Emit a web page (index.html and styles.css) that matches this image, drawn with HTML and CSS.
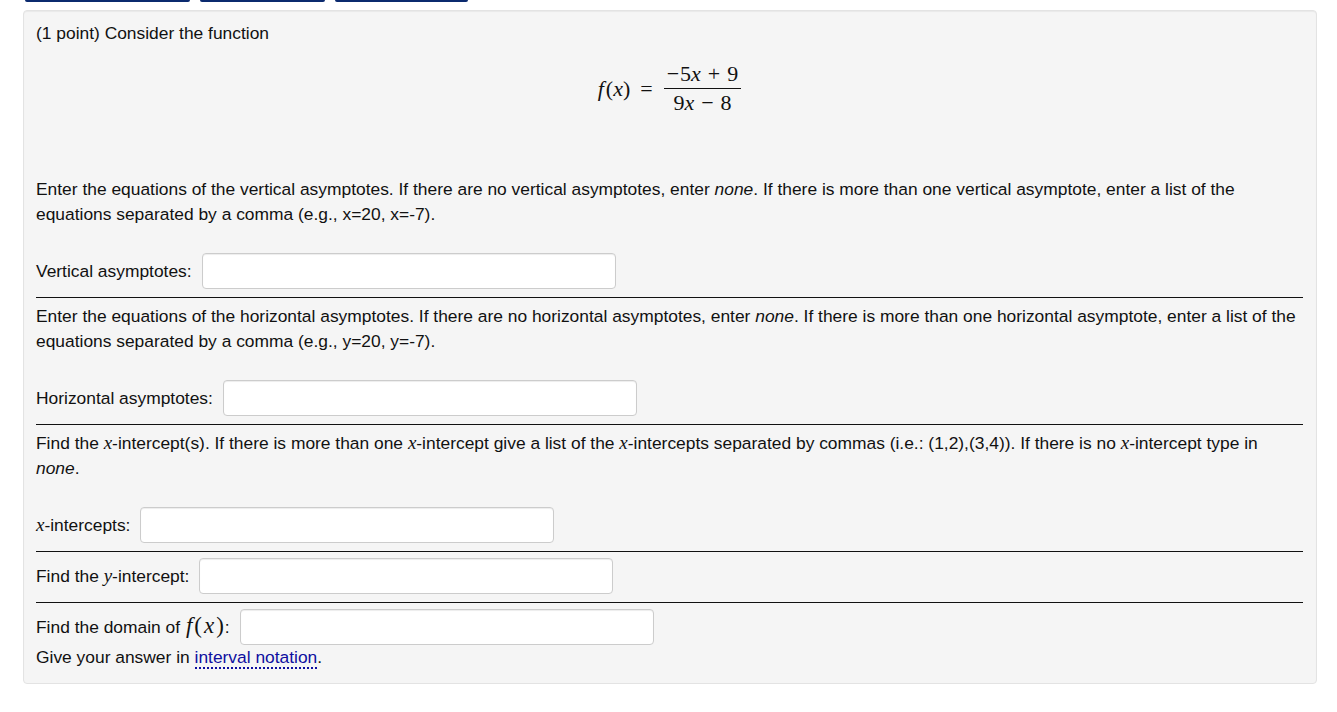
FILE: index.html
```html
<!DOCTYPE html>
<html lang="en">
<head>
  <meta charset="UTF-8" />
  <meta name="viewport" content="width=device-width, initial-scale=1.0" />
  <title>Problem</title>
  <link rel="stylesheet" href="styles.css">
</head>
<body>
  <div class="tabs">
    <span class="tab tab-1"></span>
    <span class="tab tab-2"></span>
    <span class="tab tab-3"></span>
  </div>

  <div class="problem">
    <p>(1 point) Consider the function</p>

    <div class="formula">
      <span class="mi fn">f</span><span class="mo">(</span><span class="mi">x</span><span class="mo">)</span>
      <span class="eq">=</span>
      <span class="frac">
        <span class="num"><span class="neg">−</span>5<span class="mi">x</span><span class="op">+</span>9</span>
        <span class="den">9<span class="mi">x</span><span class="op">−</span>8</span>
      </span>
    </div>

    <p class="first">Enter the equations of the vertical asymptotes. If there are no vertical asymptotes, enter <em>none</em>. If there is more than one vertical asymptote, enter a list of the equations separated by a comma (e.g., x=20, x=-7).</p>
    <div class="answer spaced">
      <label for="va">Vertical asymptotes:</label>
      <input type="text" id="va" />
    </div>
    <hr />

    <p>Enter the equations of the horizontal asymptotes. If there are no horizontal asymptotes, enter <em>none</em>. If there is more than one horizontal asymptote, enter a list of the equations separated by a comma (e.g., y=20, y=-7).</p>
    <div class="answer spaced">
      <label for="ha">Horizontal asymptotes:</label>
      <input type="text" id="ha" />
    </div>
    <hr />

    <p>Find the <span class="m">x</span>-intercept(s). If there is more than one <span class="m">x</span>-intercept give a list of the <span class="m">x</span>-intercepts separated by commas (i.e.: (1,2),(3,4)). If there is no <span class="m">x</span>-intercept type in <em>none</em>.</p>
    <div class="answer spaced">
      <label for="xi"><span class="m">x</span>-intercepts:</label>
      <input type="text" id="xi" />
    </div>
    <hr />

    <div class="answer">
      <label for="yi">Find the <span class="m">y</span>-intercept:</label>
      <input type="text" id="yi" />
    </div>
    <hr />

    <div class="answer">
      <label for="dom">Find the domain of <span class="m fx">f</span><span class="mp">(</span><span class="m fx">x</span><span class="mp">)</span>:</label>
      <input type="text" id="dom" />
    </div>
    <p>Give your answer in <a href="#" class="help">interval notation</a>.</p>
  </div>
</body>
</html>
```

FILE: styles.css
```css
body {
  font-family: "Liberation Sans", Arial, sans-serif;
  font-size: 17.4px;
  line-height: 25px;
  color: #111;
  background: #fff;
  margin: 0;
  padding: 0 20px 0 23px;
}
.tabs {
  display: flex;
  gap: 10px;
  height: 2px;
  padding-left: 2px;
}
.tab {
  display: block;
  height: 2px;
  background: #0b2a6e;
  border-radius: 0 0 4px 4px;
}
.tab-1 { width: 165px; }
.tab-2 { width: 125px; }
.tab-3 { width: 133px; }
.problem {
  margin-top: 8px;
  background: #f5f5f5;
  border: 1px solid #e3e3e3;
  border-radius: 4px;
  box-shadow: inset 0 1px 1px rgba(0, 0, 0, 0.05);
  padding: 10px 13px 13px 12px;
}
p {
  margin: 0;
}
p.first {
  margin-top: 62px;
}
em {
  font-style: italic;
}
.formula {
  display: flex;
  justify-content: center;
  align-items: center;
  margin-top: 16px;
  font-family: "Liberation Serif", "Times New Roman", serif;
  font-size: 22px;
}
.mi {
  font-style: italic;
}
.fn {
  margin-right: 2px;
}
.mo {
  font-style: normal;
}
.eq {
  margin: 0 11px 0 10px;
}
.frac {
  display: inline-flex;
  flex-direction: column;
  align-items: center;
}
.num, .den {
  line-height: 24px;
  padding: 0 3px;
  white-space: nowrap;
}
.num {
  border-bottom: 1px solid #111;
  padding-bottom: 2px;
}
.den {
  padding-top: 2px;
}
.neg {
  margin-right: 1px;
}
.op {
  margin: 0 7px;
}
.m {
  font-family: "Liberation Serif", "Times New Roman", serif;
  font-style: italic;
  font-size: 19px;
  line-height: 16px;
}
.fx {
  font-size: 23px;
  margin: 0 1px;
}
.mp {
  font-family: "Liberation Serif", "Times New Roman", serif;
  font-size: 23px;
  line-height: 16px;
  margin: 0 1px;
}
.answer {
  display: flex;
  align-items: center;
  gap: 10px;
}
.answer.spaced {
  margin-top: 26px;
}
.answer input {
  box-sizing: border-box;
  width: 414px;
  height: 36px;
  border: 1px solid #ccc;
  border-radius: 4px;
  background: #fff;
  box-shadow: inset 0 1px 1px rgba(0, 0, 0, 0.075);
  font-size: 16px;
  padding: 4px 8px;
}
hr {
  border: none;
  border-top: 1px solid #111;
  margin: 8px 0 6px;
  height: 0;
}
.help {
  color: #0f0fa0;
  text-decoration: none;
  border-bottom: 2px dotted #0f0fa0;
}
```
